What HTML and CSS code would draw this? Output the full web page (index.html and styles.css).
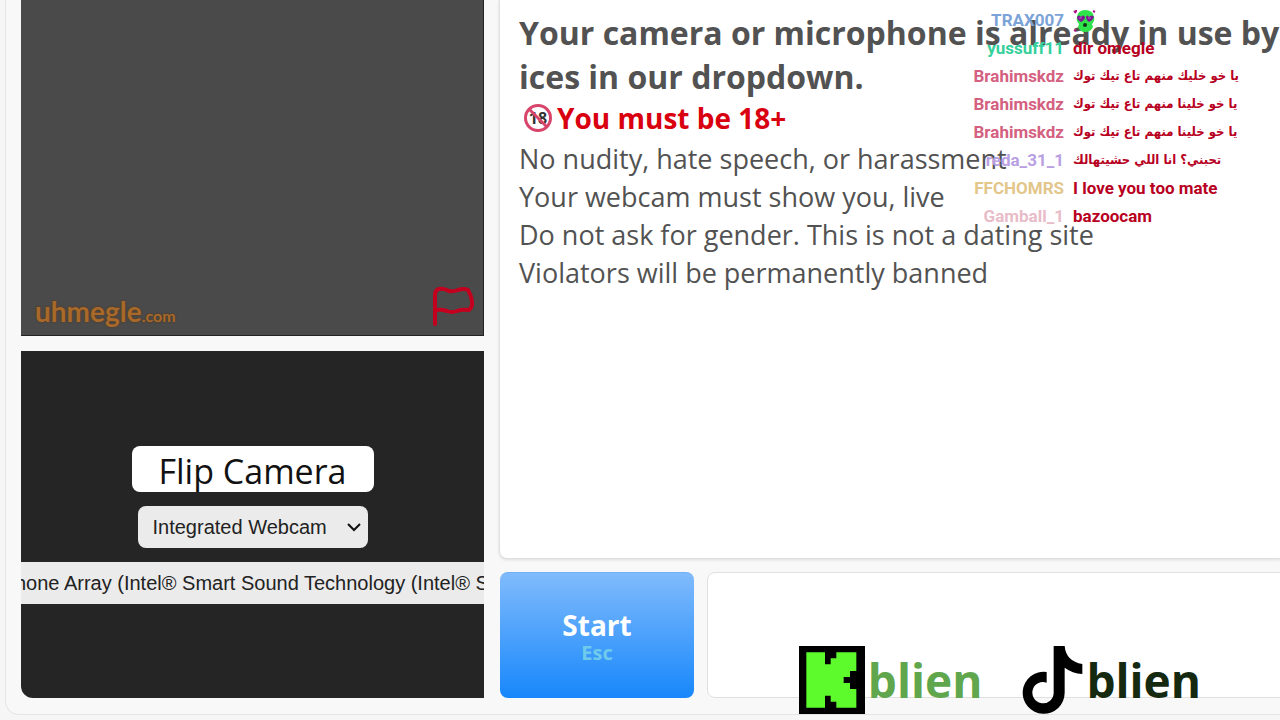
FILE: index.html
```
<!DOCTYPE html>
<html lang="en">
<head>
    <meta charset="UTF-8">
    <meta name="viewport" content="width=device-width, initial-scale=1.0">
    <title>Uhmegle</title>
    <link rel="stylesheet" href="styles.css">
</head>
<body>
    <main class="app">
        <section class="videos">
            <div class="video stranger">
                <div class="brand">uhmegle<span class="brand-com">.com</span></div>
                <button type="button" class="report" aria-label="Report">
                    <svg width="44" height="44" viewBox="0 0 44 44" fill="none" stroke="#c4001f" stroke-width="4" stroke-linecap="round" stroke-linejoin="round">
                        <path d="M5 38V9Q5 4 9 3Q14 2 19 5Q23 6 28 4Q34 2 38 4Q41 9 42 15Q43 21 39 24Q32 23 27 25Q22 27 17 25Q11 23 6 24"/>
                    </svg>
                </button>
            </div>
            <div class="video self">
                <button type="button" class="flip">Flip Camera</button>
                <div class="device">
                    <select class="device-select" aria-label="Camera">
                        <option>Integrated Webcam</option>
                    </select>
                    <svg class="chevron" width="14" height="10" viewBox="0 0 14 10" fill="none" stroke="#111" stroke-width="2">
                        <path d="M1 2L7 8L13 2"/>
                    </svg>
                </div>
                <select class="device-select mic" aria-label="Microphone">
                    <option>Microphone Array (Intel® Smart Sound Technology (Intel® Smart Sound</option>
                </select>
            </div>
        </section>

        <section class="talk">
            <div class="chat">
                <h1 class="error">Your camera or microphone is already in use by a<br>ices in our dropdown.</h1>
                <p class="adult">
                    <svg class="adult-icon" width="30" height="30" viewBox="0 0 30 30">
                        <circle cx="15" cy="15" r="12" fill="#fff"/>
                        <text x="15" y="21" class="adult-num">18</text>
                        <circle cx="15" cy="15" r="12.5" fill="none" stroke="#d8456b" stroke-width="3"/>
                        <path d="M6 6L24 24" stroke="#d8456b" stroke-width="3"/>
                    </svg>
                    You must be 18+
                </p>
                <p class="rule">No nudity, hate speech, or harassment</p>
                <p class="rule">Your webcam must show you, live</p>
                <p class="rule">Do not ask for gender. This is not a dating site</p>
                <p class="rule">Violators will be permanently banned</p>
            </div>
            <div class="controls">
                <button type="button" class="start">Start<span class="key">Esc</span></button>
                <textarea class="message" aria-label="Message"></textarea>
            </div>
        </section>
    </main>

    <!-- stream chat on top of the page -->
    <ul class="stream-chat">
        <li class="line"><span class="user lilac">reda_31_1</span><span class="arabic" dir="rtl">يا خو خليك منهم تاع تيك توك</span></li>
        <li class="line"><span class="user blue">TRAX007</span>
            <svg class="emote" width="24" height="24" viewBox="0 0 24 24">
                <path d="M4 8Q5 1 12 1Q20 1 21 8Q22 12 19 15L20 18Q18 23 12 23Q7 23 5 18L6 15Q3 12 4 8Z" fill="#2fe34a"/>
                <path d="M4 8Q6 5 8 8Q10 5 12 8Q12 11 8 13Q4 11 4 8ZM13 8Q14 5 16 8Q19 5 21 8Q20 11 16 13Q13 11 13 8Z" fill="#7d1591"/>
                <path d="M6 9h3M15 9h3" stroke="#c84fd8" stroke-width="1"/>
                <ellipse cx="12" cy="16" rx="2" ry="2" fill="#103516"/>
                <path d="M1 2l2 2M3 1v2M20 2l2 1M1 21l2 1" stroke="#b0188d" stroke-width="2"/>
            </svg>
        </li>
        <li class="line"><span class="user green">yussuff11</span><span>dir omegle</span></li>
        <li class="line"><span class="user rose">Brahimskdz</span><span class="arabic" dir="rtl">يا خو خليك منهم تاع تيك توك</span></li>
        <li class="line"><span class="user rose">Brahimskdz</span><span class="arabic" dir="rtl">يا خو خلينا منهم تاع تيك توك</span></li>
        <li class="line"><span class="user rose">Brahimskdz</span><span class="arabic" dir="rtl">يا خو خلينا منهم تاع تيك توك</span></li>
        <li class="line"><span class="user lilac">reda_31_1</span><span class="arabic" dir="rtl">تحبني؟ انا اللي حشيتهالك</span></li>
        <li class="line"><span class="user sand">FFCHOMRS</span><span>I love you too mate</span></li>
        <li class="line"><span class="user pink">Gamball_1</span><span>bazoocam</span></li>
    </ul>

    <div class="socials">
        <div class="social kick">
            <svg width="66" height="68" viewBox="0 0 198 204">
                <path d="M0 0H198V204H0Z" fill="#000"/>
                <path d="M22 19H78V55H95V37H112V19H172V75H153V93H134V111H153V129H172V185H112V167H95V149H78V185H22Z" fill="#5dfb2c"/>
            </svg>
            <span class="handle">blien</span>
        </div>
        <div class="social tiktok">
            <svg width="61" height="68" viewBox="0 0 183 204">
                <path d="M95 0H128Q132 46 181 54V84Q151 82 128 65V140A63 63 0 1 1 74 78V110A32 32 0 1 0 95 140Z" fill="#000"/>
            </svg>
            <span class="handle">blien</span>
        </div>
    </div>
</body>
</html>
```
FILE: styles.css
```
* {
    box-sizing: border-box;
}

body {
    margin: 0;
    height: 100vh;
    padding: 0 0 5px 5px;
    overflow: hidden;
    position: relative;
    background: #f6f6f6;
    font-family: "Open Sans", "Noto Sans", sans-serif;
    color: #525252;
}

.app {
    display: flex;
    gap: 15px;
    height: 100%;
    padding: 0 0 16px 15px;
    background: #f8f8f8;
    border: 1px solid #e4e4e4;
    border-width: 0 0 1px 1px;
    border-radius: 0 0 0 14px;
}

.videos {
    flex: 0 0 463px;
    display: grid;
    grid-template-columns: 100%;
    grid-template-rows: minmax(0, 336fr) minmax(0, 347fr);
    gap: 15px;
}

.video {
    display: flex;
    overflow: hidden;
}

.stranger {
    align-items: flex-end;
    justify-content: space-between;
    padding: 0 9px 5px 14px;
    background: #4a4a4a;
    border: 1px solid #222;
    border-width: 0 1px 1px 0;
}

.brand {
    font-family: Lato, sans-serif;
    font-size: 28px;
    font-weight: bold;
    line-height: 28px;
    color: #a8692a;
    text-shadow: 0 0 2px #5b3410;
}

.brand-com {
    font-size: 16px;
}

.report {
    padding: 0;
    border: 0;
    background: none;
    line-height: 0;
}

.self {
    flex-direction: column;
    align-items: center;
    padding-top: 95px;
    background: #252525;
    border-radius: 0 0 0 12px;
}

.flip {
    width: 242px;
    height: 46px;
    margin-bottom: 14px;
    padding: 2px 0 0;
    border: 0;
    border-radius: 8px;
    background: #fff;
    font-family: "Open Sans", sans-serif;
    font-size: 34px;
    line-height: 46px;
    color: #111;
}

.device {
    position: relative;
    margin-bottom: 14px;
}

.device-select {
    appearance: none;
    display: block;
    width: 230px;
    height: 42px;
    padding: 0 15px;
    border: 0;
    border-radius: 8px;
    background: #ebebeb;
    font-family: "Liberation Sans", Arial, sans-serif;
    font-size: 20px;
    color: #222;
}

.mic {
    flex-shrink: 0;
    width: 135%;
}

.chevron {
    position: absolute;
    right: 7px;
    top: 16px;
    pointer-events: none;
}

.talk {
    flex: 1;
    min-width: 0;
    display: flex;
    flex-direction: column;
    gap: 13px;
}

.chat {
    flex: 1;
    padding: 11px 0 0 19px;
    overflow: hidden;
    white-space: nowrap;
    background: #fff;
    border: 1px solid #e0e0e0;
    border-width: 0 0 1px 1px;
    border-radius: 0 0 0 8px;
    box-shadow: 0 1px 3px #ddd;
}

.error {
    margin: 0;
    font-size: 32px;
    line-height: 44px;
}

.adult,
.rule {
    margin: 0;
    font-size: 27px;
    line-height: 38px;
}

.adult {
    display: flex;
    align-items: center;
    gap: 4px;
    margin-bottom: 3px;
    padding-left: 4px;
    font-size: 28px;
    font-weight: bold;
    color: #d9000f;
}

.adult-num {
    font-size: 16px;
    font-weight: bold;
    text-anchor: middle;
    fill: #333;
}

.controls {
    display: flex;
    gap: 13px;
    height: 126px;
    padding-left: 1px;
}

.start {
    display: flex;
    flex-direction: column;
    align-items: center;
    justify-content: center;
    width: 194px;
    padding: 6px 0 0;
    border: 1px solid #6fb0f5;
    border-width: 1px 0 0;
    border-radius: 8px;
    background: linear-gradient(#80bbfc, #1787fb);
    font-family: "Open Sans", sans-serif;
    font-size: 28px;
    font-weight: bold;
    line-height: 28px;
    color: #fff;
}

.key {
    font-size: 20px;
    line-height: 28px;
    color: #6fcbec;
}

.message {
    flex: 1;
    margin-right: -8px;
    border: 1px solid #e0e0e0;
    border-radius: 8px;
    background: #fff;
    resize: none;
}

/* overlays */
.stream-chat {
    position: absolute;
    top: -22px;
    right: 0;
    width: 308px;
    margin: 0;
    padding: 0;
    list-style: none;
    font-family: Roboto, "DejaVu Sans", sans-serif;
    font-size: 17px;
    font-weight: bold;
    line-height: 28px;
    color: #b8001f;
}

.line {
    display: flex;
    gap: 9px;
    height: 28px;
    white-space: nowrap;
}

.user {
    width: 92px;
    text-align: right;
}

.arabic {
    font-family: "DejaVu Sans Condensed", "DejaVu Sans", sans-serif;
    font-size: 13px;
}

.emote {
    margin-top: 3px;
}

.blue {
    color: #7ba3d8;
}

.green {
    color: #35cf9b;
}

.rose {
    color: #d4607f;
}

.lilac {
    color: #b9a0e2;
}

.sand {
    color: #e2c68a;
}

.pink {
    color: #e8bcc8;
}

.socials {
    position: absolute;
    right: 79px;
    bottom: 6px;
    display: flex;
    gap: 40px;
    font-size: 46px;
    font-weight: bold;
    line-height: 68px;
}

.social {
    display: flex;
    gap: 3px;
}

.kick {
    color: #5fa64c;
}

.tiktok {
    color: #14290f;
}
```
